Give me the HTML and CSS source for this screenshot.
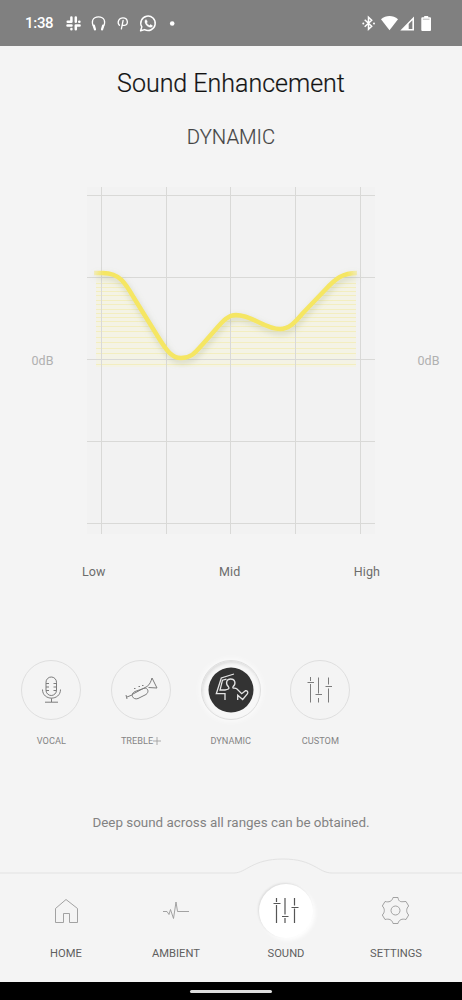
FILE: index.html
```html
<!DOCTYPE html>
<html lang="en">
<head>
<meta charset="utf-8">
<title>Sound Enhancement</title>
<link rel="stylesheet" href="styles.css">
</head>
<body>
<div class="screen">
  <header class="status">
    <span class="clock">1:38</span>
    <svg class="notices" width="112" height="20" viewBox="65 13 112 20" fill="none" stroke="#fff" stroke-linecap="round">
      <path d="M71.400 17.500v4.300M67.700 21.700h3.500M75.800 17.500v4.200M79.400 21.700h-.200M67.500 25.500h4M71.400 29.200v-.200M75.800 25.500v3.700M75.800 25.500h3.800" stroke-width="2.500"/>
      <path d="M93.800 27c-3-5-1.300-10.200 4.700-10.200s7.700 5.200 4.700 10.200" stroke-width="1.200"/>
      <path d="M93.900 25.800l1 3.500M103.100 25.800l-1 3.500" stroke-width="2.300"/>
      <path d="M119.400 25.200c-2.600-2.700-.7-7.400 3.600-7.400 5.200 0 5.800 6.900 1.400 7.600-1.200.2-2-.5-2-.5M123.100 20.500l-1.700 8.300" stroke-width="1.300"/>
      <path d="M140.600 30.800l1.200-3.900a7.200 7.200 0 1 1 2.800 2.700z" stroke-width="1.500" stroke-linejoin="round"/>
      <path d="M145.300 20.200l1.100-.4 1 2.200-.8 1c.7 1.300 1.500 2 2.800 2.600l1-1 2 1-.2 1.100c-3.400 2.400-8.800-3.500-6.900-6.500z" fill="#fff" stroke-width=".4"/>
      <circle cx="172.200" cy="23.500" r="2.300" fill="#fff" stroke="none"/>
    </svg>
    <svg class="signals" width="72" height="20" viewBox="360 13 72 20" fill="#fff">
      <path d="M364.700 19.700l7 6.500-3.200 3v-12l3.200 3-7 6.500" fill="none" stroke="#fff" stroke-width="1.500"/>
      <circle cx="363.300" cy="23.500" r="1"/><circle cx="374" cy="23.500" r="1"/>
      <path d="M381 19.200c5-4.300 12-4.300 17 0l-8.500 11z"/>
      <path d="M400.300 30.600L414 16.500v14.100zM408.700 24v5h3.700v-8.700z" fill-rule="evenodd"/>
      <path d="M424.200 16h4v1.300h1.800q1 0 1 1v11.600q0 1-1 1h-7.700q-1 0-1-1V18.300q0-1 1-1h1.900z"/>
      <path d="M422.900 19.200h6.600" stroke="#999" stroke-width=".7"/>
    </svg>
  </header>

  <main class="content">
    <h1 class="title">Sound Enhancement</h1>
    <h2 class="mode">DYNAMIC</h2>

    <section class="equalizer">
      <span class="level">0dB</span>
      <svg class="graph" width="290" height="347" viewBox="85 187 290 347">
        <defs>
          <clipPath id="under"><path d="M96 273H103C120 273 126 284 134 298L160 340C167 351 172 358 181 358C191 358 195 353 202 345L216 329C223 321 228 315 236 315C252 315 265 329 280 329C290 329 296 321 303 313L325 290C336 278 343 273 356 273V367H96Z"/></clipPath>
          <filter id="glow" x="-10%" y="-20%" width="120%" height="150%"><feDropShadow dx="1" dy="3" stdDeviation="3" flood-color="#8f9970" flood-opacity=".35"/></filter>
          <linearGradient id="tail" gradientUnits="userSpaceOnUse" x1="93" y1="0" x2="358" y2="0"><stop offset="0" stop-color="#f5e663" stop-opacity=".3"/><stop offset=".04" stop-color="#f5e663"/><stop offset=".96" stop-color="#f5e663"/><stop offset="1" stop-color="#f5e663" stop-opacity=".3"/></linearGradient>
        </defs>
        <rect class="graph-bg" x="87" y="187" width="288" height="347"/>
        <g clip-path="url(#under)">
          <rect x="96" y="273" width="260" height="94" fill="#fff8b5" opacity=".2"/>
          <path class="stripes" d="M96 283.500H356M96 287.500H356M96 291.500H356M96 295.500H356M96 300.500H356M96 304.500H356M96 309.500H356M96 313.500H356M96 317.500H356M96 321.500H356M96 326.500H356M96 331.500H356M96 337.500H356M96 342.500H356M96 348.500H356M96 353.500H356M96 359.500H356M96 364.500H356"/>
        </g>
        <path class="grid" d="M101.500 187V534M166.500 187V534M230.500 187V534M295.500 187V534M360.500 187V534M87 195.500H375M87 277.500H375M87 359.500H375M87 441.500H375M87 523.500H375"/>
        <path class="curve" filter="url(#glow)" stroke="url(#tail)" d="M94 273H103C120 273 126 284 134 298L160 340C167 351 172 358 181 358C191 358 195 353 202 345L216 329C223 321 228 315 236 315C252 315 265 329 280 329C290 329 296 321 303 313L325 290C336 278 343 273 357 273"/>
      </svg>
      <span class="level">0dB</span>
    </section>
    <div class="bands"><span>Low</span><span>Mid</span><span>High</span></div>

    <section class="presets">
      <div class="preset">
        <div class="dial"><svg width="60" height="60" viewBox="0 0 60 60">
          <rect x="25" y="17" width="10.500" height="18.500" rx="5.250"/>
          <path d="M25 23.500h3M25 27h3M25 30.500h3M35.500 23.500h-3M35.500 27h-3M35.500 30.500h-3M21.500 29.500c0 11.500 18 11.500 18 0M30.500 38.300V42M24 42.200H37"/>
        </svg></div><span>VOCAL</span>
      </div>
      <div class="preset">
        <div class="dial"><svg width="60" height="60" viewBox="0 0 60 60">
          <path d="M15 35l1 4M16 37l5-2M21 34.500L36 26.500C39 24.500 40 21 41 18L46 28 37.500 27.500M24 31.500L33 28.300C37 27.500 38.500 32 35 34.500L27 38.500C22 40.500 18.500 34 24 31.500M23 28.500h1.500M27.500 26.500h1.500M31 25.500h1.500"/>
        </svg></div><span>TREBLE<svg class="plus" width="8" height="8" viewBox="0 0 8 8"><path d="M0 4H8M4 0V8"/></svg></span>
      </div>
      <div class="preset selected">
        <div class="dial"><svg width="60" height="60" viewBox="0 0 60 60">
          <circle cx="30" cy="30" r="22.500" fill="#333" stroke="none"/>
          <path d="M33 14L20.300 18 15.300 33.700H24V40M25.500 19.200L21.500 20.200 19 30H24C26.500 29.500 29 28.800 27.500 26.800C24 23.500 25.500 19 29.700 19C34 19 35.500 23.500 32 26.800C31 29 34 27.500 36 29L40.700 33.700 44.500 30.700C46.500 30.500 47.300 32.200 46.500 33.700L41.700 39.500 36.700 35.200V40"/>
        </svg></div><span>DYNAMIC</span>
      </div>
      <div class="preset">
        <div class="dial"><svg width="60" height="60" viewBox="0 0 60 60">
          <path d="M20.500 17v4M20.500 24v18.500M17.500 22.500h6.500M28.500 17.500v16M28.500 38v4.500M25.500 34.500h6.500M38.500 17.500v7M38.500 28.500v14M35.500 26.500h6.500"/>
        </svg></div><span>CUSTOM</span>
      </div>
    </section>
    <p class="description">Deep sound across all ranges can be obtained.</p>
  </main>

  <nav class="tabs">
    <svg class="tabs-edge" width="462" height="20" viewBox="0 0 462 20"><path d="M0 17H234C246 17 252 3 283 3S318 17 332 17H462"/></svg>
    <div class="tab"><div class="tab-icon"><svg width="54" height="54" viewBox="0 0 54 54"><path d="M16.500 24.500L27 15.500 38.500 24.500V38.500H30.500V29.500H24.500V38.500H16.500Z"/></svg></div><span>HOME</span></div>
    <div class="tab"><div class="tab-icon"><svg width="54" height="54" viewBox="0 0 54 54"><path d="M14 27.500H18L20 30.500 21.500 25.500 24.500 34.500 27 18 28.500 27.500H40"/></svg></div><span>AMBIENT</span></div>
    <div class="tab active"><div class="tab-icon"><svg width="54" height="54" viewBox="0 0 54 54"><path d="M17.500 14v4M17.500 21v18M14.500 19.500h7M26 14v16.500M26 34v5M23 32.500h6.500M35.500 14v7.500M35.500 24.500V39M32.500 23.500h7"/></svg></div><span>SOUND</span></div>
    <div class="tab"><div class="tab-icon"><svg width="54" height="54" viewBox="0 0 54 54"><circle cx="26.500" cy="26.500" r="4.500"/><path d="M24 13.500H29C29.500 17 31 18 34 17.700L37 17.500 39.700 22C37 24.500 37 28.500 39.700 31L37 35.500C33 34.500 30 35.500 29 39.500H24C23 35.500 20 34.500 16 35.500L13.300 31C16 28.500 16 24.500 13.300 22L16 17.500C20 18.500 23 17.500 24 13.500Z" stroke-linejoin="round"/></svg></div><span>SETTINGS</span></div>
  </nav>
  <footer class="gesture"><div class="handle"></div></footer>
</div>
</body>
</html>
```
FILE: styles.css
```css
* { box-sizing: border-box; }
body { margin: 0; background: #f4f4f4; font-family: Roboto, sans-serif; }
svg { display: block; flex: none; }
.screen { width: 462px; height: 1000px; display: flex; flex-direction: column; background: #f4f4f4; overflow: hidden; }
.status { height: 46px; flex: none; background: #808080; display: flex; align-items: center; padding: 0 30px 0 25px; color: #fff; }
.clock { width: 40px; font-size: 15px; font-weight: 500; line-height: 20px; letter-spacing: -.3px; }
.signals { margin-left: auto; }
.content { height: 810px; flex: none; display: flex; flex-direction: column; }
.title { margin: 20px 0 0; height: 34px; line-height: 36px; font-size: 25px; font-weight: 300; text-align: center; color: #111; -webkit-text-stroke: .2px #222; }
.mode { margin: 24px 0 0; height: 26px; line-height: 26px; font-size: 20.300px; font-weight: 300; text-align: center; color: #444; -webkit-text-stroke: .15px #444; }
.equalizer { margin-top: 37px; height: 347px; display: flex; }
.level { width: 85px; flex: none; text-align: center; line-height: 348px; font-size: 12.500px; color: #b0b0b0; }
.equalizer .level:last-child { width: 107px; margin-right: -20px; }
.graph-bg { fill: #f2f2f2; }
.grid { stroke: #d9d9d7; stroke-width: 1; fill: none; }
.stripes { stroke: #f3ecad; stroke-width: 1; opacity: .65; }
.curve { fill: none; stroke-width: 4.500; }
.bands { height: 18px; margin: 29px 82px 0; display: flex; justify-content: space-between; line-height: 18px; font-size: 12.500px; color: #6c6c6c; letter-spacing: .1px; }
.presets { display: flex; margin: 79px 0 0 6.500px; }
.preset { width: 89.700px; display: flex; flex-direction: column; align-items: center; gap: 13px; font-size: 9.200px; line-height: 15px; color: #858585; }
.preset span { display: flex; align-items: center; }
.dial { width: 60px; height: 60px; border-radius: 50%; border: 1px solid #dfdfdf; }
.dial svg { margin: -1px; fill: none; stroke: #7c7c7c; stroke-width: 1; }
.dial .plus, .plus { fill: none; stroke: #999; stroke-width: .8; }
.selected .dial { border-color: #dedede; background: #f7f7f7; box-shadow: 0 0 4px 2px #fafafa, inset 1px 2px 3px #ddd; }
.selected .dial svg { stroke: #e3e3e3; stroke-width: 1.300; }
.description { margin: 65px 0 0; line-height: 20px; font-size: 13.400px; text-align: center; color: #828282; }
.tabs { position: relative; height: 126px; flex: none; display: flex; padding: 28px 11px 0; }
.tabs-edge { position: absolute; left: 0; top: 0; fill: none; stroke: #e2e2e2; }
.tab { width: 110px; display: flex; flex-direction: column; align-items: center; gap: 7px; font-size: 11.200px; line-height: 17px; color: #5f5f5f; }
.tab-icon { width: 54px; height: 54px; border-radius: 50%; }
.tab-icon svg { fill: none; stroke: #999; stroke-width: .9; }
.active .tab-icon { background: #fff; box-shadow: -1px -1px 2px #ddd, 2px 2px 4px #fff; }
.active .tab-icon svg { stroke: #555; stroke-width: 1.200; }
.gesture { height: 18px; flex: none; background: #000; display: flex; justify-content: center; align-items: center; padding-top: 1px; }
.handle { width: 82px; height: 3px; border-radius: 2px; background: #ddd; }
```
